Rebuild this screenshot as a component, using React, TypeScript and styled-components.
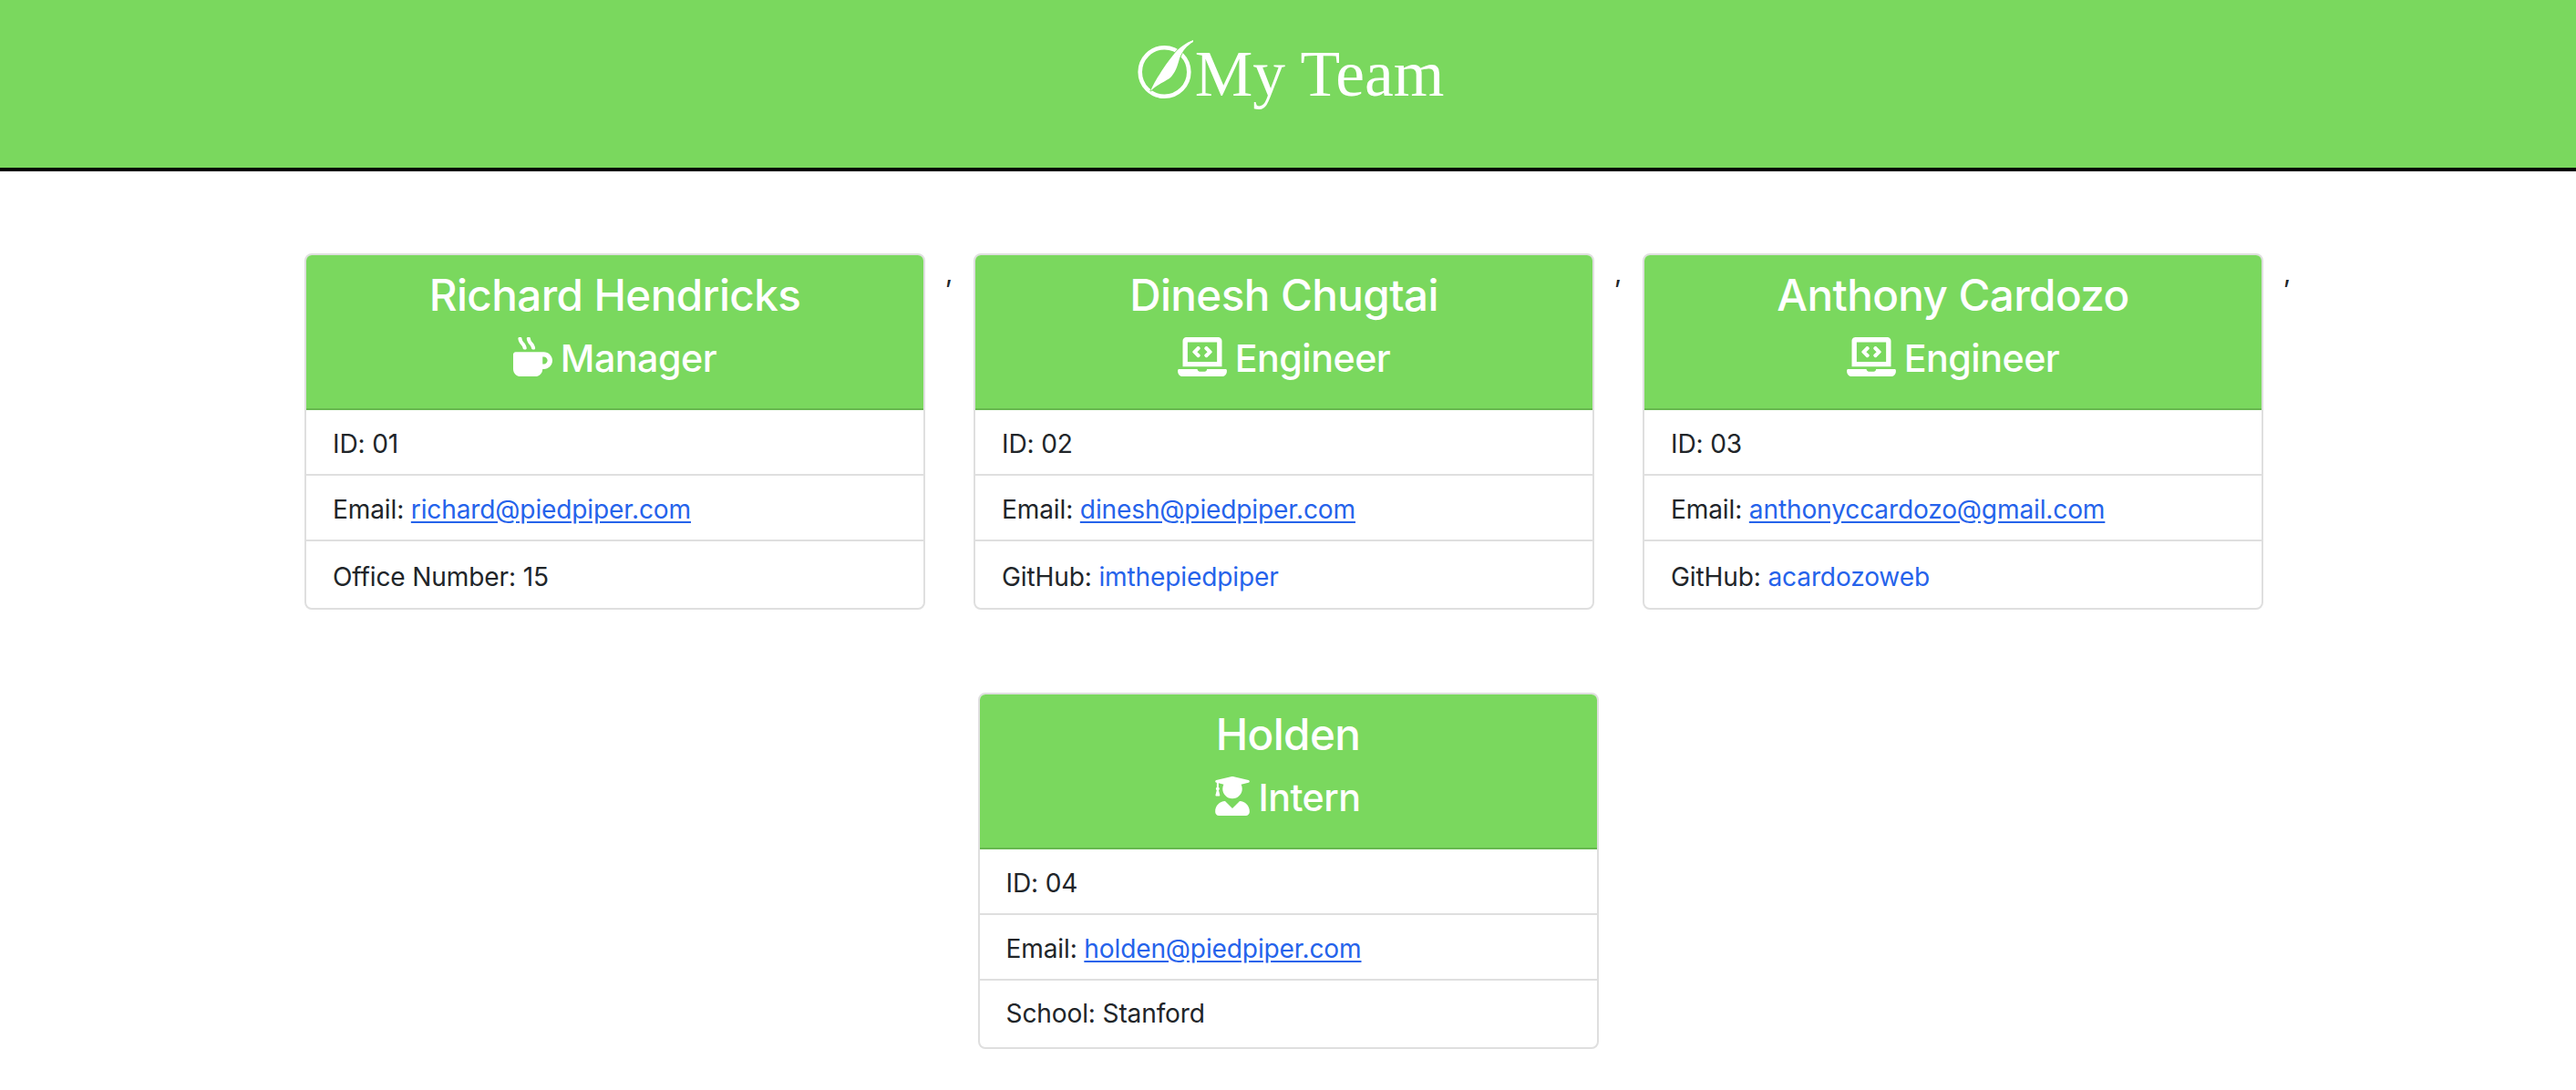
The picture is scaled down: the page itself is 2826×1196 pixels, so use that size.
import React from "react";
import styled, { createGlobalStyle } from "styled-components";
import { FaMugHot, FaLaptopCode, FaUserGraduate } from "react-icons/fa";

const Global = createGlobalStyle`
  html, body { margin: 0; padding: 0; background: #fff; }
  body { font-family: Inter, "Liberation Sans", sans-serif; color: #212529; }
`;

const Banner = styled.header`
  height: 184px;
  background: #7ad85e;
  border-bottom: 4px solid #000;
  display: flex;
  align-items: flex-start;
  justify-content: center;
`;

const Title = styled.h1`
  margin: 40px 0 0;
  display: flex;
  align-items: flex-start;
  font-family: "Liberation Serif", serif;
  font-weight: 400;
  font-size: 71.5px;
  line-height: 82px;
  color: #fff;
`;

const Logo = styled.svg`
  width: 64px;
  height: 66px;
  margin: 4px 0 0 5px;
  flex: none;
`;

const Grid = styled.main`
  display: flex;
  flex-wrap: wrap;
  justify-content: center;
  align-items: flex-start;
  row-gap: 91px;
  padding-top: 90px;
`;

const Slot = styled.div`
  display: flex;
  align-items: flex-start;
`;

const Card = styled.article`
  width: 681px;
  margin: 0 22px;
  box-sizing: border-box;
  border: 2px solid #dfdfdf;
  border-radius: 8px;
  overflow: hidden;
  background: #fff;
`;

const CardHead = styled.div`
  height: 170px;
  box-sizing: border-box;
  background: #7ad85e;
  border-bottom: 2px solid #67b84f;
  color: #fff;
  text-align: center;
  padding-top: 13px;
`;

const Name = styled.h3`
  margin: 0;
  font-size: 47.6px;
  line-height: 62px;
  font-weight: 500;
  letter-spacing: -0.6px;
`;

const Role = styled.h4<{ $iconWidth: number }>`
  margin: 10px 0 0;
  font-size: 41.2px;
  line-height: 56px;
  font-weight: 500;
  letter-spacing: -0.5px;
  display: flex;
  align-items: center;
  justify-content: center;
  gap: 9px;
  svg {
    flex: none;
    width: ${(p) => p.$iconWidth}px;
    height: 43px;
    margin-top: -4px;
  }
`;

const Line = styled.div<{ $tight?: boolean }>`
  height: 72px;
  box-sizing: border-box;
  padding: 3px 29px 0;
  display: flex;
  align-items: center;
  white-space: pre;
  font-size: 28.1px;
  letter-spacing: -0.15px;
  border-bottom: 2px solid #dfdfdf;
  &:last-child {
    border-bottom: 0;
    height: 73px;
    padding-top: ${(p) => (p.$tight ? "0" : "5px")};
    padding-bottom: ${(p) => (p.$tight ? "2px" : "0")};
  }
`;

const Link = styled.a<{ $plain?: boolean }>`
  color: #2563eb;
  text-decoration: ${(p) => (p.$plain ? "none" : "underline")};
  text-underline-offset: 3px;
`;

const Comma = styled.span`
  font-size: 29px;
  line-height: 43px;
  width: 9px;
  color: #212529;
`;

type Person = {
  name: string;
  role: string;
  icon: React.ReactNode;
  iconWidth: number;
  id: string;
  email: string;
  label: string;
  value: string;
  link?: boolean;
  comma?: boolean;
  tight?: boolean;
};

const people: Person[] = [
  { name: "Richard Hendricks", role: "Manager", icon: <FaMugHot />, iconWidth: 43, id: "01", email: "richard@piedpiper.com", label: "Office Number", value: "15", comma: true },
  { name: "Dinesh Chugtai", role: "Engineer", icon: <FaLaptopCode />, iconWidth: 54, id: "02", email: "dinesh@piedpiper.com", label: "GitHub", value: "imthepiedpiper", link: true, comma: true },
  { name: "Anthony Cardozo", role: "Engineer", icon: <FaLaptopCode />, iconWidth: 54, id: "03", email: "anthonyccardozo@gmail.com", label: "GitHub", value: "acardozoweb", link: true, comma: true },
  { name: "Holden", role: "Intern", icon: <FaUserGraduate />, iconWidth: 38, id: "04", email: "holden@piedpiper.com", label: "School", value: "Stanford", tight: true },
];

export default function App() {
  return (
    <>
      <Global />
      <Banner>
        <Title>
          <Logo viewBox="0 0 64 66" aria-hidden="true">
            <circle cx="30.5" cy="35" r="26.8" fill="none" stroke="#fff" strokeWidth="4.6" />
            <path
              d="M62 0 C54 3 47 8 42 14 C32 26 22 41 15 56 C22 49 30 46 36 42 C42 37 45 28 47 20 C50 12 55 6 62 2 Z"
              fill="#fff"
              stroke="#7ad85e"
              strokeWidth="1.6"
              paintOrder="stroke"
            />
          </Logo>
          My Team
        </Title>
      </Banner>
      <Grid>
        {people.map((p) => (
          <Slot key={p.id}>
            <Card>
              <CardHead>
                <Name>{p.name}</Name>
                <Role $iconWidth={p.iconWidth}>
                  {p.icon}
                  {p.role}
                </Role>
              </CardHead>
              <Line>ID: {p.id}</Line>
              <Line>
                Email: <Link href={`mailto:${p.email}`}>{p.email}</Link>
              </Line>
              <Line $tight={p.tight}>
                {p.label}: {p.link ? <Link $plain href="#">{p.value}</Link> : p.value}
              </Line>
            </Card>
            {p.comma && <Comma>,</Comma>}
          </Slot>
        ))}
      </Grid>
    </>
  );
}
